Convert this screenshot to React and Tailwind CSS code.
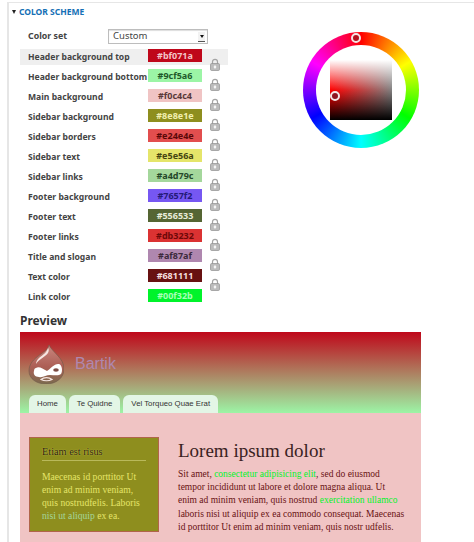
import React from "react";

const sans = "font-['Noto_Sans',sans-serif]";

// label, swatch colour, text colour on the swatch
const colors = [
  ["Header background top", "#bf071a", "#f3c4c8"],
  ["Header background bottom", "#9cf5a6", "#1f5a2a"],
  ["Main background", "#f0c4c4", "#5a3a3a"],
  ["Sidebar background", "#8e8e1e", "#f2eeb0"],
  ["Sidebar borders", "#e24e4e", "#5a0808"],
  ["Sidebar text", "#e5e56a", "#454510"],
  ["Sidebar links", "#a4d79c", "#24482a"],
  ["Footer background", "#7657f2", "#241a78"],
  ["Footer text", "#556533", "#e8ecd8"],
  ["Footer links", "#db3232", "#6e0808"],
  ["Title and slogan", "#af87af", "#3c2a3c"],
  ["Text color", "#681111", "#f6dede"],
  ["Link color", "#00f32b", "#a8ffb8"],
];

const LockIcon = () => (
  <svg width="10" height="13" viewBox="0 0 10 13" className="block">
    <path d="M2.5 6V3.8a2.5 2.5 0 0 1 5 0V6" fill="none" stroke="#a3a3a3" strokeWidth="1.2" />
    <rect x="0.5" y="5.5" width="9" height="7" rx="1.2" fill="#bcbcbc" stroke="#8f8f8f" strokeWidth="0.7" />
    <rect x="3.8" y="7.6" width="2.4" height="2.8" rx="0.8" fill="#f5f5f5" />
  </svg>
);

const DropLogo = () => (
  <svg width="36" height="40" viewBox="0 0 36 40" className="block">
    <defs>
      <linearGradient id="drop" x1="0" y1="0" x2="0" y2="1">
        <stop offset="0" stopColor="#c9877f" />
        <stop offset="0.55" stopColor="#ad5f56" />
        <stop offset="1" stopColor="#7b6a4e" />
      </linearGradient>
    </defs>
    <path d="M21 1C20 6 14 9 9 13C4 17 1 21 1 27C1 35 9 40 18 40C28 40 36 34 36 25C36 14 25 9 21 1Z" fill="url(#drop)" stroke="#6f5a4a" strokeWidth="0.6" />
    <path d="M20 4C19 8 15 11 11 14C9 16 8 18 8 20C11 15 17 13 20 9C21 7 21 5 20 4Z" fill="#f6e6e2" />
    <path d="M8 24C11 22 15 25 19 27C22 25 27 19 31 20C34 21 35 27 33 30C31 32 26 31 22 31C18 31 15 34 11 33C7 33 5 30 6 27C6 25 7 24 8 24Z" fill="#ffffff" />
    <ellipse cx="28" cy="26" rx="2.8" ry="1.7" fill="#7c4a42" />
    <path d="M13 35.5C16 33 21 33 24 35.5C21 37 16 37 13 35.5Z" fill="none" stroke="#f6e6e2" strokeWidth="1.2" />
  </svg>
);

const ColorWheel = () => (
  <div className="relative w-[116px] h-[116px] ml-[75px] mt-[11px] shrink-0">
    <div className="absolute inset-0 rounded-full bg-[conic-gradient(#f00,#ff0,#0f0,#0ff,#00f,#f0f,#f00)]" />
    <div className="absolute inset-[13px] rounded-full bg-white" />
    <div className="absolute left-[27px] top-[28px] w-[62px] h-[60px] bg-[linear-gradient(to_bottom,#fff,rgba(255,255,255,0)_50%,rgba(0,0,0,0)_50%,#000),linear-gradient(to_right,#f00,#808080)]" />
    <div className="absolute left-[48px] top-[1px] w-[10px] h-[10px] rounded-full bg-[#b5101c] border-2 border-[#f3e6e6]" />
    <div className="absolute left-[27px] top-[59px] w-[10px] h-[10px] rounded-full bg-[#8f1420] border-2 border-[#f3e6e6]" />
  </div>
);

const bodyLines = [
  <>Sit amet, <span className="text-[#00f32b]">consectetur adipisicing elit</span>, sed do eiusmod</>,
  <>tempor incididunt ut labore et dolore magna aliqua. Ut</>,
  <>enim ad minim veniam, quis nostrud <span className="text-[#00f32b]">exercitation ullamco</span></>,
  <>laboris nisi ut aliquip ex ea commodo consequat. Maecenas</>,
  <>id porttitor Ut enim ad minim veniam, quis nostr udfelis.</>,
];

export default function App() {
  return (
    <div className={`w-[474px] h-[542px] overflow-hidden bg-white ${sans}`}>
      <div className="ml-[7px] mt-[2px] h-[540px] border-l-2 border-t border-[#e6e6e6] pl-[3px]">
        {/* Fieldset heading */}
        <div className="h-[18px] flex items-center">
          <span className="mr-[3px] w-0 h-0 border-x-[2.5px] border-x-transparent border-t-[4px] border-t-[#222]" />
          <span className="text-[8.5px] font-bold text-[#1570b5]">COLOR SCHEME</span>
        </div>

        <div className="flex">
          <div className="w-[208px] ml-[8px] shrink-0">
            {/* Color set */}
            <div className="mt-[8px] mb-[5px] h-[15px] flex items-center pl-[8px]">
              <span className="w-[80px] text-[8.8px] font-bold text-[#444]">Color set</span>
              <div className="w-[100px] h-[15px] flex items-center justify-between border border-[#bdbdbd] pl-[4px] pr-[2px] shadow-[inset_0_1px_1px_#ddd]">
                <span className="text-[9.5px] text-[#444]">Custom</span>
                <span className="w-[7px] h-[10px] flex items-center justify-center border-b border-[#555] bg-[#f2f2f2]">
                  <span className="w-0 h-0 border-x-[2px] border-x-transparent border-t-[3px] border-t-[#111]" />
                </span>
              </div>
            </div>

            {/* Colour rows */}
            {colors.map(([label, hex, ink], i) => (
              <div key={label} className={`h-4 mb-1 flex items-start pl-[8px] ${i === 0 ? "bg-[#efefef]" : ""}`}>
                <span className="w-[120px] h-4 leading-[16px] text-[8.6px] font-bold text-[#444] whitespace-nowrap">{label}</span>
                <div
                  className="w-[54px] h-[13px] flex items-center justify-center text-[9px] font-bold leading-none"
                  style={{ backgroundColor: hex, color: ink }}
                >
                  {hex}
                </div>
                {i < colors.length - 1 && (
                  <div className="ml-[8px] mt-[9px]">
                    <LockIcon />
                  </div>
                )}
              </div>
            ))}
          </div>
          <ColorWheel />
        </div>

        {/* Preview */}
        <div className="mt-[4px] ml-[8px] h-4 leading-4 text-[12px] font-bold text-[#333]">Preview</div>
        <div className="mt-[3px] ml-[8px] w-[401px] bg-[#f0c4c4]">
          <div className="h-[81px] flex flex-col justify-between bg-[linear-gradient(to_bottom,#bf071a,#9cf5a6)]">
            <div className="flex items-center pl-2 pt-3">
              <DropLogo />
              <span className="ml-[11px] text-[16px] text-[#af87af] font-['Liberation_Sans',sans-serif]">Bartik</span>
            </div>
            <div className="flex gap-[3px] pl-[9px] font-['Liberation_Sans',sans-serif] text-[7.8px] text-[#333]">
              {["Home", "Te Quidne", "Vel Torqueo Quae Erat"].map((tab) => (
                <div key={tab} className="h-[18px] px-2 leading-[18px] rounded-t-md bg-[#e3f6e6]">
                  {tab}
                </div>
              ))}
            </div>
          </div>

          <div className="flex pl-[9px] pt-6 pb-3 font-['Liberation_Serif',serif]">
            <div className="w-[130px] h-[95px] shrink-0 bg-[#8e8e1e] border border-[#b0654a] px-[12px] pt-[8px] text-[9.6px] leading-[13px] text-[#e5e56a]">
              <div className="h-[15px] pb-[3px] border-b border-[#b9b95a] text-[10.3px] leading-[11px] text-[#2b1a08] [text-shadow:0_0_1px_#e5e56a]">Etiam est risus</div>
              <p className="mt-[9px]">
                Maecenas id porttitor Ut enim ad minim veniam, quis nostrudfelis. Laboris <span className="text-[#a4d79c]">nisi ut aliquip</span> ex ea.
              </p>
            </div>
            <div className="ml-[19px] w-[232px]">
              <h2 className="text-[19px] leading-[28px] text-[#3a2222]">Lorem ipsum dolor</h2>
              <div className="mt-[3px] text-[9.5px] leading-[13.2px] text-[#681111] whitespace-nowrap">
                {bodyLines.map((line, i) => (
                  <p key={i}>{line}</p>
                ))}
              </div>
            </div>
          </div>
        </div>
      </div>
    </div>
  );
}
